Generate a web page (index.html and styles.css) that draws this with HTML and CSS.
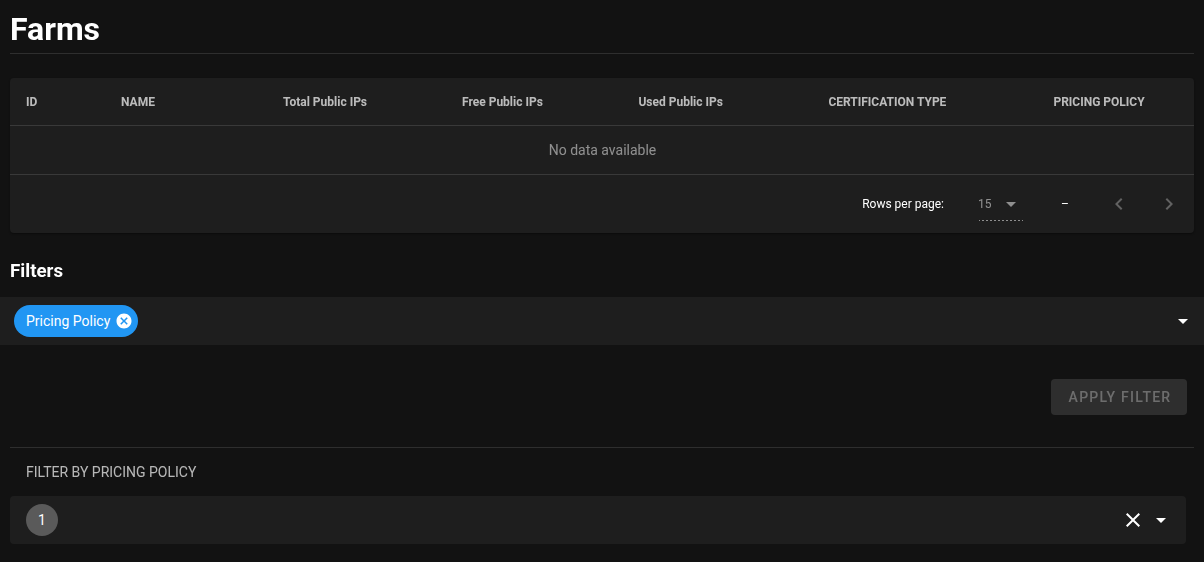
FILE: index.html
```html
<!DOCTYPE html>
<html lang="en">
<head>
<meta charset="utf-8">
<title>Farms</title>
<link rel="stylesheet" href="styles.css">
</head>
<body>
<header class="page-head layer">
  <h1 class="title">Farms</h1>
  <hr class="divider">
</header>
<section class="card layer">
  <div class="thead row-grid">
    <div>ID</div><div>NAME</div><div>Total Public IPs</div><div>Free Public IPs</div><div>Used Public IPs</div><div>CERTIFICATION TYPE</div><div>PRICING POLICY</div>
  </div>
  <div class="empty">No data available</div>
  <div class="footer">
    <span class="rows-label">Rows per page:</span>
    <div class="rows-select">
      <span class="rows-value">15</span>
      <svg class="caret" width="24" height="24" viewBox="0 0 24 24"><path d="M7 10l5 5 5-5z"/></svg>
    </div>
    <span class="page-range">–</span>
    <button class="page-btn prev" aria-label="Previous page"><svg width="24" height="24" viewBox="0 0 24 24"><path d="M15.41 16.58L10.83 12l4.58-4.59L14 6l-6 6 6 6z"/></svg></button>
    <button class="page-btn next" aria-label="Next page"><svg width="24" height="24" viewBox="0 0 24 24"><path d="M8.59 16.58L13.17 12 8.59 7.41 10 6l6 6-6 6z"/></svg></button>
  </div>
</section>
<h2 class="filters-title layer">Filters</h2>
<div class="filter-bar layer">
  <span class="chip">Pricing Policy
    <svg class="chip-close" width="18" height="18" viewBox="0 0 24 24"><path d="M12 2C6.47 2 2 6.47 2 12s4.47 10 10 10 10-4.47 10-10S17.53 2 12 2zm5 13.59L15.59 17 12 13.41 8.41 17 7 15.59 10.59 12 7 8.41 8.41 7 12 10.59 15.59 7 17 8.41 13.41 12 17 15.59z"/></svg>
  </span>
  <svg class="bar-caret" width="24" height="24" viewBox="0 0 24 24"><path d="M7 10l5 5 5-5z"/></svg>
</div>
<div class="actions layer"><button class="apply" disabled>APPLY FILTER</button></div>
<hr class="divider lower">
<div class="filter-label layer">FILTER BY PRICING POLICY</div>
<div class="select layer">
  <span class="badge">1</span>
  <svg class="clear" width="24" height="24" viewBox="0 0 24 24"><path d="M19 6.41L17.59 5 12 10.59 6.41 5 5 6.41 10.59 12 5 17.59 6.41 19 12 13.41 17.59 19 19 17.59 13.41 12z"/></svg>
  <svg class="select-caret" width="24" height="24" viewBox="0 0 24 24"><path d="M7 10l5 5 5-5z"/></svg>
</div>
</body>
</html>
```
FILE: styles.css
```css
* { box-sizing: border-box; }
html, body { margin: 0; height: 562px; overflow: hidden; }
body {
  background: #121212;
  color: #fff;
  font-family: Roboto, "Liberation Sans", sans-serif;
  font-size: 14px;
  -webkit-font-smoothing: antialiased;
}
.layer { will-change: opacity; }
.page-head { padding: 10px 10px 0; }
.title { margin: 0; height: 43px; font-size: 32px; line-height: 38px; font-weight: 700; }
.divider { margin: 0; border: 0; border-top: 1px solid rgba(255,255,255,.12); }
.card {
  margin: 24px 10px 0;
  height: 155px;
  background: #1e1e1e;
  border-radius: 4px;
  box-shadow: 0 1px 2px rgba(0,0,0,.4);
}
.row-grid { display: grid; grid-template-columns: 95px 162px 179px 176.4px 190px 225px 156.6px; }
.thead {
  height: 48px;
  border-bottom: 1px solid rgba(255,255,255,.12);
  font-size: 12px;
  font-weight: 700;
  color: rgba(255,255,255,.7);
  align-items: center;
}
.thead > div { padding-left: 16px; white-space: nowrap; }
.empty {
  height: 49px;
  padding-left: 1px;
  line-height: 48px;
  text-align: center;
  color: rgba(255,255,255,.5);
  border-bottom: 1px solid rgba(255,255,255,.12);
}
.footer {
  display: flex;
  align-items: center;
  justify-content: flex-end;
  height: 58px;
  font-size: 12px;
  color: #fff;
}
.rows-label { margin-right: 34px; }
.rows-select {
  display: flex;
  align-items: center;
  width: 45px;
  height: 34px;
  margin-right: 38px;
  border-bottom: 1px solid transparent;
  border-image: repeating-linear-gradient(to right, rgba(255,255,255,.5) 0, rgba(255,255,255,.5) 2px, transparent 2px, transparent 4px) 1 repeat;
  color: rgba(255,255,255,.5);
}
.rows-value { width: 21px; }
.caret { fill: rgba(255,255,255,.5); }
.page-range { width: 7px; margin-right: 39px; }
.page-btn {
  display: flex;
  align-items: center;
  justify-content: center;
  width: 24px;
  height: 24px;
  padding: 0;
  border: 0;
  background: none;
}
.page-btn svg { fill: rgba(255,255,255,.3); }
.next { margin: 0 13px 0 26px; }
.filters-title { margin: 26px 10px 0; height: 38px; font-size: 18.72px; line-height: 24px; font-weight: 700; }
.filter-bar {
  display: flex;
  align-items: center;
  justify-content: space-between;
  height: 48px;
  padding: 0 9px 0 14px;
  background: #1e1e1e;
}
.chip {
  display: inline-flex;
  align-items: center;
  height: 32px;
  padding: 0 5.5px 0 12px;
  border-radius: 16px;
  background: #2196f3;
  color: #fff;
}
.chip-close { margin-left: 4.5px; fill: #fff; }
.bar-caret { fill: #fff; }
.actions { display: flex; justify-content: flex-end; padding: 34px 17px 0 0; }
.apply {
  width: 136px;
  height: 36px;
  padding: 0 0 0 2px;
  border: 0;
  border-radius: 4px;
  background: rgba(255,255,255,.12);
  color: rgba(255,255,255,.3);
  font: 500 14px Roboto, "Liberation Sans", sans-serif;
  letter-spacing: 1.25px;
}
.lower { margin: 32px 10px 0; }
.filter-label {
  height: 48px;
  padding: 16px 0 0 26px;
  line-height: 16px;
  color: rgba(255,255,255,.7);
}
.select {
  display: flex;
  align-items: center;
  height: 48px;
  margin: 0 18px 0 10px;
  padding: 0 13px 0 16px;
  border-radius: 4px;
  background: #1e1e1e;
}
.badge {
  display: flex;
  align-items: center;
  justify-content: center;
  width: 32px;
  height: 32px;
  border-radius: 50%;
  background: #5a5a5a;
  color: #fff;
}
.clear { margin-left: auto; fill: #fff; }
.select-caret { fill: #fff; margin-left: 4px; }
```
